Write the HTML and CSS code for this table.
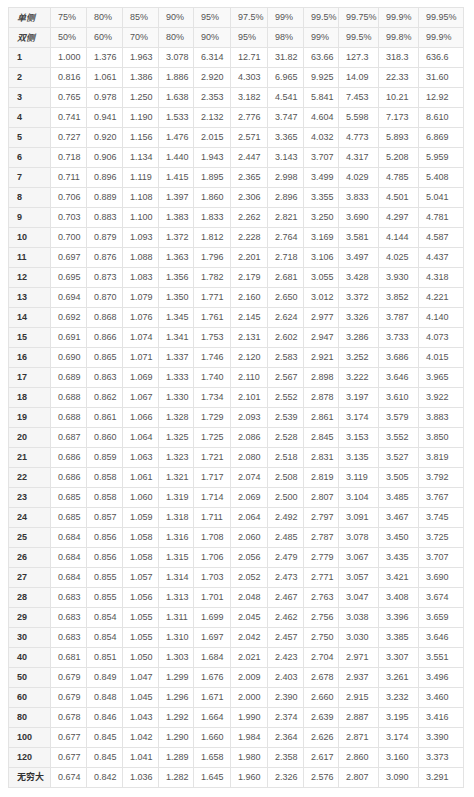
FILE: index.html
```html
<!DOCTYPE html>
<html lang="zh">
<head>
<meta charset="utf-8">
<title>t分布临界值表</title>
<link rel="stylesheet" href="styles.css">
</head>
<body>
<table class="ttable">
<colgroup>
<col class="w42"><col class="w36"><col class="w36"><col class="w36"><col class="w35"><col class="w37"><col class="w37"><col class="w36"><col class="w35"><col class="w40"><col class="w40"><col class="w45">
</colgroup>
<thead>
<tr><th class="side">单侧</th><td>75%</td><td>80%</td><td>85%</td><td>90%</td><td>95%</td><td>97.5%</td><td>99%</td><td>99.5%</td><td>99.75%</td><td>99.9%</td><td>99.95%</td></tr>
<tr><th class="side">双侧</th><td>50%</td><td>60%</td><td>70%</td><td>80%</td><td>90%</td><td>95%</td><td>98%</td><td>99%</td><td>99.5%</td><td>99.8%</td><td>99.9%</td></tr>
</thead>
<tbody>
<tr><th>1</th><td>1.000</td><td>1.376</td><td>1.963</td><td>3.078</td><td>6.314</td><td>12.71</td><td>31.82</td><td>63.66</td><td>127.3</td><td>318.3</td><td>636.6</td></tr>
<tr><th>2</th><td>0.816</td><td>1.061</td><td>1.386</td><td>1.886</td><td>2.920</td><td>4.303</td><td>6.965</td><td>9.925</td><td>14.09</td><td>22.33</td><td>31.60</td></tr>
<tr><th>3</th><td>0.765</td><td>0.978</td><td>1.250</td><td>1.638</td><td>2.353</td><td>3.182</td><td>4.541</td><td>5.841</td><td>7.453</td><td>10.21</td><td>12.92</td></tr>
<tr><th>4</th><td>0.741</td><td>0.941</td><td>1.190</td><td>1.533</td><td>2.132</td><td>2.776</td><td>3.747</td><td>4.604</td><td>5.598</td><td>7.173</td><td>8.610</td></tr>
<tr><th>5</th><td>0.727</td><td>0.920</td><td>1.156</td><td>1.476</td><td>2.015</td><td>2.571</td><td>3.365</td><td>4.032</td><td>4.773</td><td>5.893</td><td>6.869</td></tr>
<tr><th>6</th><td>0.718</td><td>0.906</td><td>1.134</td><td>1.440</td><td>1.943</td><td>2.447</td><td>3.143</td><td>3.707</td><td>4.317</td><td>5.208</td><td>5.959</td></tr>
<tr><th>7</th><td>0.711</td><td>0.896</td><td>1.119</td><td>1.415</td><td>1.895</td><td>2.365</td><td>2.998</td><td>3.499</td><td>4.029</td><td>4.785</td><td>5.408</td></tr>
<tr><th>8</th><td>0.706</td><td>0.889</td><td>1.108</td><td>1.397</td><td>1.860</td><td>2.306</td><td>2.896</td><td>3.355</td><td>3.833</td><td>4.501</td><td>5.041</td></tr>
<tr><th>9</th><td>0.703</td><td>0.883</td><td>1.100</td><td>1.383</td><td>1.833</td><td>2.262</td><td>2.821</td><td>3.250</td><td>3.690</td><td>4.297</td><td>4.781</td></tr>
<tr><th>10</th><td>0.700</td><td>0.879</td><td>1.093</td><td>1.372</td><td>1.812</td><td>2.228</td><td>2.764</td><td>3.169</td><td>3.581</td><td>4.144</td><td>4.587</td></tr>
<tr><th>11</th><td>0.697</td><td>0.876</td><td>1.088</td><td>1.363</td><td>1.796</td><td>2.201</td><td>2.718</td><td>3.106</td><td>3.497</td><td>4.025</td><td>4.437</td></tr>
<tr><th>12</th><td>0.695</td><td>0.873</td><td>1.083</td><td>1.356</td><td>1.782</td><td>2.179</td><td>2.681</td><td>3.055</td><td>3.428</td><td>3.930</td><td>4.318</td></tr>
<tr><th>13</th><td>0.694</td><td>0.870</td><td>1.079</td><td>1.350</td><td>1.771</td><td>2.160</td><td>2.650</td><td>3.012</td><td>3.372</td><td>3.852</td><td>4.221</td></tr>
<tr><th>14</th><td>0.692</td><td>0.868</td><td>1.076</td><td>1.345</td><td>1.761</td><td>2.145</td><td>2.624</td><td>2.977</td><td>3.326</td><td>3.787</td><td>4.140</td></tr>
<tr><th>15</th><td>0.691</td><td>0.866</td><td>1.074</td><td>1.341</td><td>1.753</td><td>2.131</td><td>2.602</td><td>2.947</td><td>3.286</td><td>3.733</td><td>4.073</td></tr>
<tr><th>16</th><td>0.690</td><td>0.865</td><td>1.071</td><td>1.337</td><td>1.746</td><td>2.120</td><td>2.583</td><td>2.921</td><td>3.252</td><td>3.686</td><td>4.015</td></tr>
<tr><th>17</th><td>0.689</td><td>0.863</td><td>1.069</td><td>1.333</td><td>1.740</td><td>2.110</td><td>2.567</td><td>2.898</td><td>3.222</td><td>3.646</td><td>3.965</td></tr>
<tr><th>18</th><td>0.688</td><td>0.862</td><td>1.067</td><td>1.330</td><td>1.734</td><td>2.101</td><td>2.552</td><td>2.878</td><td>3.197</td><td>3.610</td><td>3.922</td></tr>
<tr><th>19</th><td>0.688</td><td>0.861</td><td>1.066</td><td>1.328</td><td>1.729</td><td>2.093</td><td>2.539</td><td>2.861</td><td>3.174</td><td>3.579</td><td>3.883</td></tr>
<tr><th>20</th><td>0.687</td><td>0.860</td><td>1.064</td><td>1.325</td><td>1.725</td><td>2.086</td><td>2.528</td><td>2.845</td><td>3.153</td><td>3.552</td><td>3.850</td></tr>
<tr><th>21</th><td>0.686</td><td>0.859</td><td>1.063</td><td>1.323</td><td>1.721</td><td>2.080</td><td>2.518</td><td>2.831</td><td>3.135</td><td>3.527</td><td>3.819</td></tr>
<tr><th>22</th><td>0.686</td><td>0.858</td><td>1.061</td><td>1.321</td><td>1.717</td><td>2.074</td><td>2.508</td><td>2.819</td><td>3.119</td><td>3.505</td><td>3.792</td></tr>
<tr><th>23</th><td>0.685</td><td>0.858</td><td>1.060</td><td>1.319</td><td>1.714</td><td>2.069</td><td>2.500</td><td>2.807</td><td>3.104</td><td>3.485</td><td>3.767</td></tr>
<tr><th>24</th><td>0.685</td><td>0.857</td><td>1.059</td><td>1.318</td><td>1.711</td><td>2.064</td><td>2.492</td><td>2.797</td><td>3.091</td><td>3.467</td><td>3.745</td></tr>
<tr><th>25</th><td>0.684</td><td>0.856</td><td>1.058</td><td>1.316</td><td>1.708</td><td>2.060</td><td>2.485</td><td>2.787</td><td>3.078</td><td>3.450</td><td>3.725</td></tr>
<tr><th>26</th><td>0.684</td><td>0.856</td><td>1.058</td><td>1.315</td><td>1.706</td><td>2.056</td><td>2.479</td><td>2.779</td><td>3.067</td><td>3.435</td><td>3.707</td></tr>
<tr><th>27</th><td>0.684</td><td>0.855</td><td>1.057</td><td>1.314</td><td>1.703</td><td>2.052</td><td>2.473</td><td>2.771</td><td>3.057</td><td>3.421</td><td>3.690</td></tr>
<tr><th>28</th><td>0.683</td><td>0.855</td><td>1.056</td><td>1.313</td><td>1.701</td><td>2.048</td><td>2.467</td><td>2.763</td><td>3.047</td><td>3.408</td><td>3.674</td></tr>
<tr><th>29</th><td>0.683</td><td>0.854</td><td>1.055</td><td>1.311</td><td>1.699</td><td>2.045</td><td>2.462</td><td>2.756</td><td>3.038</td><td>3.396</td><td>3.659</td></tr>
<tr><th>30</th><td>0.683</td><td>0.854</td><td>1.055</td><td>1.310</td><td>1.697</td><td>2.042</td><td>2.457</td><td>2.750</td><td>3.030</td><td>3.385</td><td>3.646</td></tr>
<tr><th>40</th><td>0.681</td><td>0.851</td><td>1.050</td><td>1.303</td><td>1.684</td><td>2.021</td><td>2.423</td><td>2.704</td><td>2.971</td><td>3.307</td><td>3.551</td></tr>
<tr><th>50</th><td>0.679</td><td>0.849</td><td>1.047</td><td>1.299</td><td>1.676</td><td>2.009</td><td>2.403</td><td>2.678</td><td>2.937</td><td>3.261</td><td>3.496</td></tr>
<tr><th>60</th><td>0.679</td><td>0.848</td><td>1.045</td><td>1.296</td><td>1.671</td><td>2.000</td><td>2.390</td><td>2.660</td><td>2.915</td><td>3.232</td><td>3.460</td></tr>
<tr><th>80</th><td>0.678</td><td>0.846</td><td>1.043</td><td>1.292</td><td>1.664</td><td>1.990</td><td>2.374</td><td>2.639</td><td>2.887</td><td>3.195</td><td>3.416</td></tr>
<tr><th>100</th><td>0.677</td><td>0.845</td><td>1.042</td><td>1.290</td><td>1.660</td><td>1.984</td><td>2.364</td><td>2.626</td><td>2.871</td><td>3.174</td><td>3.390</td></tr>
<tr><th>120</th><td>0.677</td><td>0.845</td><td>1.041</td><td>1.289</td><td>1.658</td><td>1.980</td><td>2.358</td><td>2.617</td><td>2.860</td><td>3.160</td><td>3.373</td></tr>
<tr><th>无穷大</th><td>0.674</td><td>0.842</td><td>1.036</td><td>1.282</td><td>1.645</td><td>1.960</td><td>2.326</td><td>2.576</td><td>2.807</td><td>3.090</td><td>3.291</td></tr>
</tbody>
</table>
</body>
</html>
```
FILE: styles.css
```css
html, body {
  background: #ffffff;
}
body {
  margin: 7px 8px;
  font-family: "Liberation Sans", Arial, "Noto Sans CJK SC", sans-serif;
  font-size: 9px;
  color: #555555;
}
.ttable {
  border-collapse: collapse;
  table-layout: fixed;
  width: 455px;
}
.w35 { width: 35px; }
.w36 { width: 36px; }
.w37 { width: 37px; }
.w40 { width: 40px; }
.w42 { width: 42px; }
.w45 { width: 45px; }
.ttable th,
.ttable td {
  height: 19px;
  padding: 0 0 0 7px;
  border: 1px solid #e3e3e3;
  text-align: left;
  vertical-align: middle;
  white-space: nowrap;
  overflow: hidden;
  line-height: 19px;
}
.ttable th {
  background: #f6f6f6;
  color: #333333;
  font-weight: bold;
  padding-left: 8px;
}
.ttable th.side {
  font-family: "Noto Sans CJK SC", sans-serif;
  font-style: italic;
  font-weight: bold;
  color: #444444;
}
.ttable thead td {
  background: #f9f9f9;
}
```
